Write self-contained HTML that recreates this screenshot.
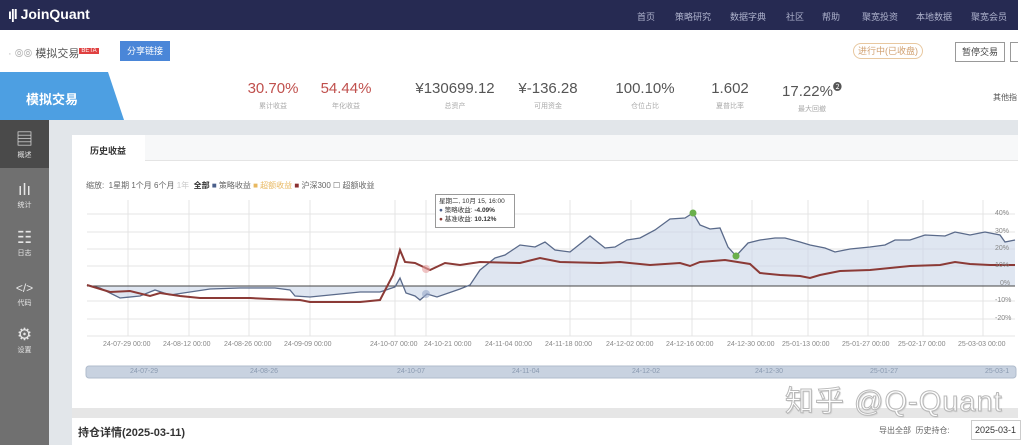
<!DOCTYPE html>
<html><head><meta charset="utf-8"><style>
*{margin:0;padding:0;box-sizing:border-box}
body{width:1036px;height:445px;overflow:hidden;background:#fff;font-family:"Liberation Sans","Noto Sans CJK SC",sans-serif;position:relative;color:#333}
.a{position:absolute}
.nav{left:0;top:0;width:1018px;height:30px;background:#262a52}
.nav span{position:absolute;top:10px;font-size:9px;color:#aeb2cc}
.stat{position:absolute;top:80px;text-align:center;width:100px}
.stat b{display:block;font-weight:normal;font-size:15px;color:#555}
.stat i{display:block;font-style:normal;font-size:7px;color:#aaa;margin-top:4px}
.side{left:0;top:120px;width:49px;height:325px;background:#707070}
.si{position:absolute;left:0;width:49px;text-align:center;color:#e6e6e6;font-size:7px}
.si div{font-size:17px;line-height:20px}
.xl{position:absolute;top:341px;font-size:7px;color:#888}
.yl{position:absolute;left:995px;font-size:7px;color:#888}
</style></head><body>
<div class="a nav">
<div class="a" style="left:8px;top:6px;color:#fff;font-size:14px;font-weight:bold"><span style="position:static;color:#fff;font-size:14px;letter-spacing:-1px">ı|l</span> JoinQuant</div>
<span style="left:637px">首页</span><span style="left:675px">策略研究</span><span style="left:730px">数据字典</span><span style="left:786px">社区</span><span style="left:822px">帮助</span><span style="left:862px">聚宽投资</span><span style="left:916px">本地数据</span><span style="left:971px">聚宽会员</span>
</div>
<div class="a" style="left:8px;top:45px;font-size:11px;color:#555"><span style="color:#bbb">· ⦾⦾</span> 模拟交易<sup style="background:#e04040;color:#fff;font-size:6px;padding:0 2px">BETA</sup></div>
<div class="a" style="left:120px;top:41px;width:50px;height:20px;background:#4a86d8;color:#fff;font-size:9px;text-align:center;line-height:20px">分享链接</div>
<div class="a" style="left:853px;top:43px;width:70px;height:16px;border:1px solid #e8c8a0;border-radius:9px;color:#d0a070;font-size:9px;text-align:center;line-height:14px">进行中(已收盘)</div>
<div class="a" style="left:955px;top:42px;width:50px;height:20px;border:1px solid #999;color:#444;font-size:9px;text-align:center;line-height:18px">暂停交易</div>
<div class="a" style="left:1010px;top:42px;width:8px;height:20px;border:1px solid #999;border-right:none"></div>
<svg class="a" style="left:0;top:72px" width="125" height="48"><polygon points="0,0 108,0 124,48 0,48" fill="#4d9fe2"/></svg>
<div class="a" style="left:26px;top:89px;color:#fff;font-size:13px;font-weight:bold">模拟交易</div>
<div class="stat" style="left:223px"><b style="color:#c0504d">30.70%</b><i>累计收益</i></div>
<div class="stat" style="left:296px"><b style="color:#c0504d">54.44%</b><i>年化收益</i></div>
<div class="stat" style="left:405px"><b>¥130699.12</b><i>总资产</i></div>
<div class="stat" style="left:498px"><b>¥-136.28</b><i>可用资金</i></div>
<div class="stat" style="left:595px"><b>100.10%</b><i>仓位占比</i></div>
<div class="stat" style="left:680px"><b>1.602</b><i>夏普比率</i></div>
<div class="stat" style="left:762px"><b>17.22%<sup style="font-size:9px">❷</sup></b><i>最大回撤</i></div>
<div class="a" style="left:993px;top:92px;font-size:8px;color:#555">其他指</div>
<div class="a" style="left:0;top:120px;width:1018px;height:15px;background:#e2e6ea"></div>
<div class="a" style="left:49px;top:135px;width:23px;height:310px;background:#e2e6ea"></div>
<div class="a side"></div>
<div class="a" style="left:0;top:120px;width:49px;height:48px;background:#4a4a4a"></div>
<div class="si" style="top:130px"><div>▤</div>概述</div>
<div class="si" style="top:180px"><div>ılı</div>统计</div>
<div class="si" style="top:228px"><div>☷</div>日志</div>
<div class="si" style="top:278px"><div style="font-size:12px">&lt;/&gt;</div>代码</div>
<div class="si" style="top:325px"><div>⚙</div>设置</div>
<div class="a" style="left:72px;top:135px;width:946px;height:273px;background:#fff"></div>
<div class="a" style="left:145px;top:135px;width:873px;height:26px;background:#f7f8f9;border-bottom:1px solid #e4e4e4"></div>
<div class="a" style="left:90px;top:144px;font-size:9px;font-weight:bold;color:#333">历史收益</div>
<div class="a" style="left:86px;top:180px;font-size:8px;color:#666">缩放: &nbsp;1星期 1个月 6个月 <span style="color:#ccc">1年</span> &nbsp;<b style="color:#333">全部</b> <span style="color:#4a5f8a">■</span> 策略收益 <span style="color:#e8b860">■ 超额收益</span> <span style="color:#8b3030">■</span> 沪深300 ☐ 超额收益</div>
<svg class="a" style="left:0;top:0" width="1036" height="445">
<g stroke="#e4e4e4" stroke-width="1">
<line x1="87" y1="214" x2="1015" y2="214"/><line x1="87" y1="232" x2="1015" y2="232"/><line x1="87" y1="249" x2="1015" y2="249"/><line x1="87" y1="266" x2="1015" y2="266"/><line x1="87" y1="301" x2="1015" y2="301"/><line x1="87" y1="319" x2="1015" y2="319"/><line x1="87" y1="336" x2="1015" y2="336"/>
<line x1="128" y1="200" x2="128" y2="336"/><line x1="189" y1="200" x2="189" y2="336"/><line x1="249" y1="200" x2="249" y2="336"/><line x1="310" y1="200" x2="310" y2="336"/><line x1="395" y1="200" x2="395" y2="336"/><line x1="426" y1="200" x2="426" y2="336"/><line x1="570" y1="200" x2="570" y2="336"/><line x1="631" y1="200" x2="631" y2="336"/><line x1="692" y1="200" x2="692" y2="336"/><line x1="752" y1="200" x2="752" y2="336"/><line x1="808" y1="200" x2="808" y2="336"/><line x1="868" y1="200" x2="868" y2="336"/><line x1="923" y1="200" x2="923" y2="336"/><line x1="983" y1="200" x2="983" y2="336"/>
</g>
<path d="M87,285 L100,288 L110,293 L120,298 L140,296 L155,290 L170,295 L190,292 L210,289 L240,288 L275,288 L290,290 L295,296 L310,297 L330,295 L360,292 L380,292 L395,287 L400,278 L406,293 L415,296 L420,300 L427,294 L437,297 L460,289 L470,285 L480,270 L495,258 L505,255 L520,245 L535,247 L545,242 L555,250 L570,252 L580,244 L590,236 L605,248 L615,247 L627,240 L640,238 L655,230 L670,219 L685,218 L693,213 L700,225 L710,229 L720,228 L728,247 L736,256 L748,243 L760,240 L775,238 L785,238 L800,242 L810,245 L825,248 L835,252 L850,249 L870,247 L885,245 L895,240 L910,240 L925,235 L945,236 L955,232 L970,235 L985,232 L1000,235 L1005,242 L1015,240 L1015,286 L87,286 Z" fill="#c9d6e8" fill-opacity="0.6"/>
<line x1="87" y1="286" x2="1015" y2="286" stroke="#444" stroke-width="1"/>
<path d="M87,285 L100,288 L110,293 L120,298 L140,296 L155,290 L170,295 L190,292 L210,289 L240,288 L275,288 L290,290 L295,296 L310,297 L330,295 L360,292 L380,292 L395,287 L400,278 L406,293 L415,296 L420,300 L427,294 L437,297 L460,289 L470,285 L480,270 L495,258 L505,255 L520,245 L535,247 L545,242 L555,250 L570,252 L580,244 L590,236 L605,248 L615,247 L627,240 L640,238 L655,230 L670,219 L685,218 L693,213 L700,225 L710,229 L720,228 L728,247 L736,256 L748,243 L760,240 L775,238 L785,238 L800,242 L810,245 L825,248 L835,252 L850,249 L870,247 L885,245 L895,240 L910,240 L925,235 L945,236 L955,232 L970,235 L985,232 L1000,235 L1005,242 L1015,240" fill="none" stroke="#5a6a8a" stroke-width="1.3"/>
<path d="M87,285 L110,292 L130,291 L150,296 L160,293 L180,296 L200,298 L250,298 L270,299 L300,300 L310,302 L360,302 L380,300 L393,275 L400,250 L405,262 L415,263 L430,270 L445,263 L460,265 L480,262 L520,263 L540,258 L560,262 L600,263 L620,262 L650,265 L680,263 L690,266 L700,262 L725,260 L750,264 L760,273 L780,275 L800,276 L810,278 L820,275 L840,271 L870,270 L890,268 L910,266 L940,265 L955,262 L970,264 L990,265 L1015,265" fill="none" stroke="#8b3a36" stroke-width="2"/>
<circle cx="693" cy="213" r="3.5" fill="#6ab04c"/><circle cx="736" cy="256" r="3.5" fill="#6ab04c"/>
<circle cx="426" cy="269" r="4" fill="#e8a0a0" fill-opacity="0.6"/><circle cx="426" cy="294" r="4" fill="#99aacc" fill-opacity="0.6"/>
<rect x="86" y="366" width="930" height="12" rx="3" fill="#c8d2e0" stroke="#b0bccc"/>
</svg>
<div class="a" style="left:435px;top:194px;width:80px;height:34px;background:#fff;border:1px solid #999;font-size:6.5px;color:#333;padding:2px 3px;line-height:9px">星期二, 10月 15, 16:00<br><span style="color:#4a5f8a">●</span> 策略收益: <b>-4.09%</b><br><span style="color:#8b3a36">●</span> 基准收益: <b>10.12%</b></div>
<div class="xl" style="left:103px">24-07-29 00:00</div><div class="xl" style="left:163px">24-08-12 00:00</div><div class="xl" style="left:224px">24-08-26 00:00</div><div class="xl" style="left:284px">24-09-09 00:00</div><div class="xl" style="left:370px">24-10-07 00:00</div><div class="xl" style="left:424px">24-10-21 00:00</div><div class="xl" style="left:485px">24-11-04 00:00</div><div class="xl" style="left:545px">24-11-18 00:00</div><div class="xl" style="left:606px">24-12-02 00:00</div><div class="xl" style="left:666px">24-12-16 00:00</div><div class="xl" style="left:727px">24-12-30 00:00</div><div class="xl" style="left:782px">25-01-13 00:00</div><div class="xl" style="left:842px">25-01-27 00:00</div><div class="xl" style="left:898px">25-02-17 00:00</div><div class="xl" style="left:958px">25-03-03 00:00</div>
<div class="yl" style="top:210px">40%</div><div class="yl" style="top:228px">30%</div><div class="yl" style="top:245px">20%</div><div class="yl" style="top:262px">10%</div><div class="yl" style="top:280px;left:1000px">0%</div><div class="yl" style="top:297px">-10%</div><div class="yl" style="top:315px">-20%</div>
<div class="a" style="top:368px;left:130px;font-size:7px;color:#8a9ab0">24-07-29</div><div class="a" style="top:368px;left:250px;font-size:7px;color:#8a9ab0">24-08-26</div><div class="a" style="top:368px;left:397px;font-size:7px;color:#8a9ab0">24-10-07</div><div class="a" style="top:368px;left:512px;font-size:7px;color:#8a9ab0">24-11-04</div><div class="a" style="top:368px;left:632px;font-size:7px;color:#8a9ab0">24-12-02</div><div class="a" style="top:368px;left:755px;font-size:7px;color:#8a9ab0">24-12-30</div><div class="a" style="top:368px;left:870px;font-size:7px;color:#8a9ab0">25-01-27</div><div class="a" style="top:368px;left:985px;font-size:7px;color:#8a9ab0">25-03-1</div>
<div class="a" style="left:72px;top:408px;width:946px;height:10px;background:#e6e6e6"></div>
<div class="a" style="left:72px;top:418px;width:946px;height:27px;background:#fff"></div>
<div class="a" style="left:78px;top:424px;font-size:11px;font-weight:bold;color:#333">持仓详情(2025-03-11)</div>
<div class="a" style="left:879px;top:425px;font-size:8px;color:#666">导出全部 &nbsp;历史持仓:</div>
<div class="a" style="left:971px;top:420px;width:50px;height:20px;border:1px solid #ccc;font-size:9px;line-height:18px;padding-left:3px;color:#333;overflow:hidden;white-space:nowrap">2025-03-1</div>
<div class="a" style="left:785px;top:378px;font-size:29px;color:#fff;-webkit-text-stroke:1px #b8b8b8;text-shadow:1px 1px 1px #ccc;white-space:nowrap;letter-spacing:1px">知乎 @Q-Quant</div>
</body></html>
